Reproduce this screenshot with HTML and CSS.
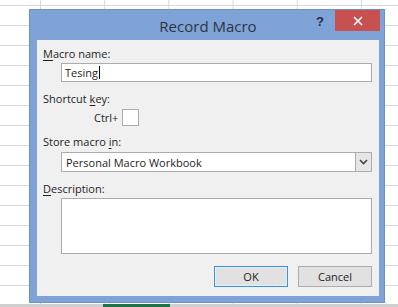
FILE: index.html
```html
<!DOCTYPE html>
<html lang="en">
<head>
  <meta charset="UTF-8">
  <title>Record Macro</title>
  <link rel="stylesheet" href="styles.css">
</head>
<body>

  <div class="sheet">

    <!-- dialog window over the worksheet -->
    <div class="dialog">
      <div class="titlebar">
        <span></span>
        <div class="title">Record Macro</div>
        <div class="controls">
          <span class="help">?</span>
          <span class="close">
            <svg width="10" height="10" viewBox="0 0 10 10"><path d="M1 1 L9 9 M9 1 L1 9" stroke="#fff" stroke-width="1.6"/></svg>
          </span>
        </div>
      </div>

      <div class="client">
        <div class="label"><u>M</u>acro name:</div>
        <div class="field name">Tesing<span class="caret"></span></div>

        <div class="label gap"><span>Shortcut </span><u>k</u>ey:</div>
        <div class="shortcut">
          <span>Ctrl+</span>
          <span class="keybox"></span>
        </div>

        <div class="label gap-s">Store macro <u>i</u>n:</div>
        <div class="field select">
          <span class="value">Personal Macro Workbook</span>
          <span class="drop">
            <svg width="9" height="6" viewBox="0 0 9 6"><path d="M1 1 L4.5 4.5 L8 1" fill="none" stroke="#444" stroke-width="1.6"/></svg>
          </span>
        </div>

        <div class="label gap"><u>D</u>escription:</div>
        <div class="field desc"></div>

        <div class="buttons">
          <button class="btn ok">OK</button>
          <button class="btn">Cancel</button>
        </div>
      </div>
    </div>

  </div>

  <div class="tabs"><span class="tab"></span></div>

</body>
</html>
```

FILE: styles.css
```css
* {
  box-sizing: border-box;
}
body {
  margin: 0;
  width: 398px;
  height: 307px;
  overflow: hidden;
  background: #fff;
  font-family: "Open Sans", "Noto Sans", sans-serif;
  font-size: 11px;
  color: #1e1e1e;
}
.sheet {
  height: 304px;
  padding: 9px 0 0 29px;
  background-image:
    linear-gradient(to bottom, #d9d9d9 1px, transparent 1px),
    linear-gradient(to right, #d9d9d9 1px, transparent 1px);
  background-size: 100% 20px, 64.2px 100%;
  background-position: 0 5px, 40px 0;
}
.tabs {
  height: 3px;
  background: #cfcfcf;
}
.tab {
  display: block;
  margin-left: 103px;
  width: 67px;
  height: 3px;
  background: #217346;
}

/* window frame */
.dialog {
  width: 356px;
  height: 294px;
  background: #7fa3d7;
  border: 1px solid #6c8fc6;
  padding: 0 5px 6px 7px;
}
.titlebar {
  height: 30px;
  display: grid;
  grid-template-columns: 1fr auto 1fr;
  align-items: center;
}
.title {
  font-size: 15px;
  color: #2d3440;
  padding-top: 1px;
}
.controls {
  display: flex;
  justify-content: flex-end;
  align-self: start;
  margin-right: -1px;
}
.help {
  font-family: "Liberation Sans", sans-serif;
  font-weight: bold;
  font-size: 13px;
  color: #1f2e4a;
  margin: 4px 11px 0 0;
}
.close {
  width: 45px;
  height: 21px;
  background: #c75050;
  display: flex;
  align-items: center;
  justify-content: center;
}

/* client area */
.client {
  height: 256px;
  background: #f0f0f0;
  padding: 6px 7px 9px 6px;
}
.label {
  height: 16px;
  line-height: 16px;
  white-space: nowrap;
}
.label u {
  text-decoration-thickness: 1px;
  text-underline-offset: 2px;
}
.gap {
  margin-top: 9px;
}
.gap-s {
  margin-top: 8px;
}
.field {
  margin-left: 18px;
  background: #fff;
  border: 1px solid #acacac;
}
.name {
  margin-top: 1px;
  height: 19px;
  line-height: 17px;
  padding-left: 3px;
  display: flex;
  align-items: center;
}
.caret {
  display: inline-block;
  width: 1px;
  height: 13px;
  background: #000;
  margin-left: 1px;
}
.shortcut {
  margin-top: 2px;
  height: 17px;
  display: flex;
  align-items: center;
  gap: 4px;
  padding-left: 51px;
}
.keybox {
  width: 17px;
  height: 17px;
  background: #fff;
  border: 1px solid #acacac;
}
.select {
  margin-top: 2px;
  height: 20px;
  display: flex;
  align-items: center;
  padding-left: 4px;
}
.select .value {
  flex: 1;
}
.drop {
  width: 16px;
  height: 18px;
  background: #e6e6e6;
  border-left: 1px solid #acacac;
  display: flex;
  align-items: center;
  justify-content: center;
}
.desc {
  margin-top: 1px;
  height: 56px;
}
.buttons {
  margin-top: 12px;
  display: flex;
  justify-content: flex-end;
  gap: 10px;
}
.btn {
  width: 74px;
  height: 21px;
  padding: 0;
  font-family: inherit;
  font-size: 11px;
  color: #1e1e1e;
  background: #e1e1e1;
  border: 1px solid #adadad;
}
.btn.ok {
  border-color: #3c8fdc;
  box-shadow: inset 0 0 0 1px #e5f1fb;
}
```
